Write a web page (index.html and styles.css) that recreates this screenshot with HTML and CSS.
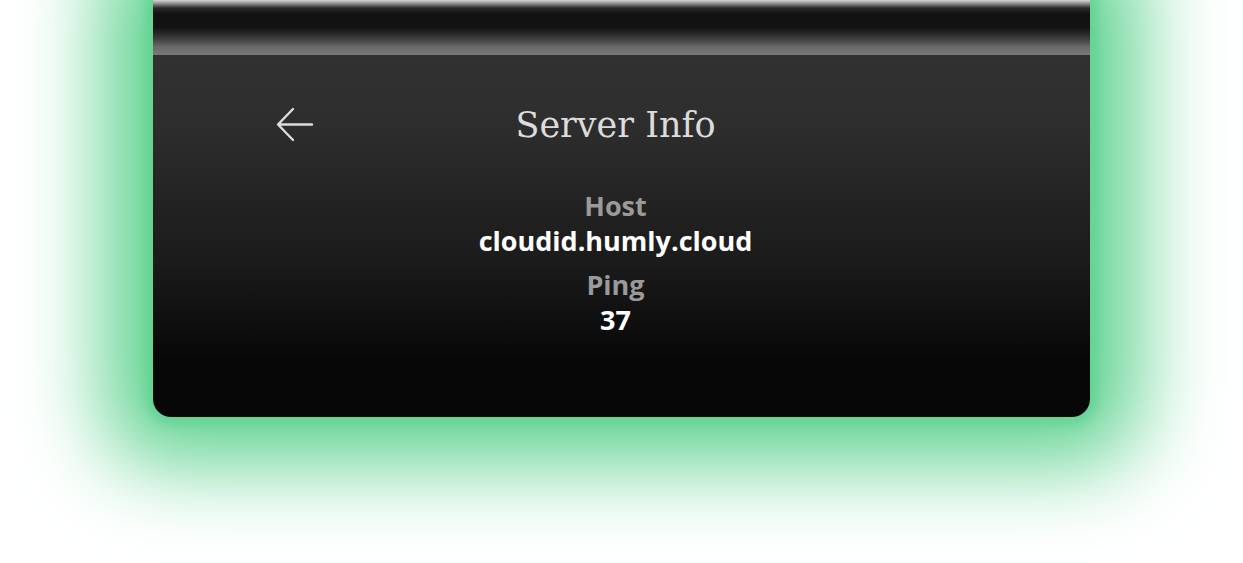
FILE: index.html
```html
<!DOCTYPE html>
<html lang="en">
<head>
  <meta charset="UTF-8">
  <meta name="viewport" content="width=device-width, initial-scale=1.0">
  <title>Server Info</title>
  <link rel="stylesheet" href="styles.css">
</head>
<body>
  <div class="device">
    <!-- Top bezel -->
    <div class="bezel"></div>

    <div class="screen">
      <div class="header">
        <a href="#" class="back" aria-label="Back">
          <svg width="38" height="36" viewBox="0 0 38 36">
            <path d="M36 17.5H3M17 2L2 17.5L17 33" fill="none" stroke="#dcdcdc" stroke-width="2.4" stroke-linecap="round" stroke-linejoin="round"/>
          </svg>
        </a>
        <h1 class="title">Server Info</h1>
        <span></span>
      </div>

      <div class="info">
        <div class="item">
          <div class="label">Host</div>
          <div class="value">cloudid.humly.cloud</div>
        </div>
        <div class="item">
          <div class="label">Ping</div>
          <div class="value">37</div>
        </div>
      </div>
    </div>
  </div>
</body>
</html>
```

FILE: styles.css
```css
html, body {
  height: 100%;
}

body {
  margin: 0;
  background: #fff;
  overflow: hidden;
  font-family: 'Open Sans', 'Noto Sans', sans-serif;
}

/* Device panel with green glow */
.device {
  width: 937px;
  height: 417px;
  margin-left: 153px;
  display: flex;
  flex-direction: column;
  border-radius: 0 0 18px 18px;
  background: linear-gradient(to bottom, #3f3f3f 0px, #333 16px, #2e2e2e 120px, #1b1b1b 260px, #070707 362px);
  box-shadow: 0 0 12px 6px #62d392, 0 -2px 84px 50px #62d392;
}

.bezel {
  height: 55px;
  flex-shrink: 0;
  background: linear-gradient(to bottom, #d6d6d6 0px, #9a9a9a 3px, #2a2a2a 8px, #111 14px, #131313 28px, #3a3a3a 38px, #6a6a6a 47px, #7a7a7a 55px);
}

.screen {
  flex: 1;
  padding: 44px 12px 0 0;
}

.header {
  display: grid;
  grid-template-columns: 1fr auto 1fr;
  align-items: center;
  height: 52px;
}

.back {
  display: flex;
  padding-left: 123px;
}

.title {
  margin: 0;
  font-family: 'DejaVu Serif', serif;
  font-weight: normal;
  font-size: 35px;
  color: #dcdcdc;
}

.info {
  margin-top: 37px;
  display: flex;
  flex-direction: column;
  align-items: center;
  gap: 9px;
  text-align: center;
}

.label,
.value {
  font-weight: bold;
  font-size: 27px;
  line-height: 35px;
}

.label {
  color: #9a9a9a;
}

.value {
  color: #fff;
}
```
